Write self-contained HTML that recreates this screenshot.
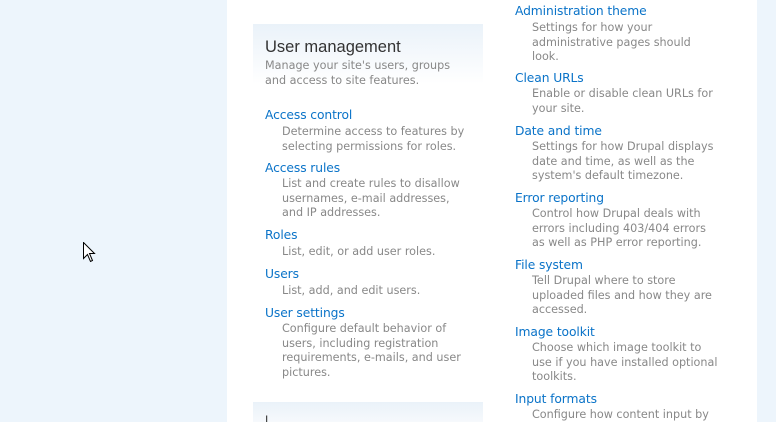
<!DOCTYPE html>
<html><head><style>
*{margin:0;padding:0}
html,body{width:776px;height:422px;overflow:hidden}
body{background:#edf5fc;position:relative;font-family:"DejaVu Sans","Liberation Sans",sans-serif}
#main{position:absolute;left:227px;top:0;width:530px;height:422px;background:#fff}
.box{position:absolute;left:253px;width:230px;height:60px;background:linear-gradient(#eaf2f9,#fff)}
.l{position:absolute;color:#0a73c8;font-size:12.3px;white-space:nowrap;letter-spacing:-0.1px}
.d{position:absolute;color:#888;font-size:11.2px;line-height:14.5px;white-space:nowrap}
.t{position:absolute;left:265px;top:38px;color:#333;font-family:"Liberation Sans",sans-serif;font-size:16.5px}
</style></head><body>
<div id="main"></div>
<div class="box" style="top:24px"></div>
<div class="box" style="top:402px;height:20px;background:linear-gradient(#eaf2f9,#f6f9fc)"></div>
<div class="t">User management</div>
<div class="d" style="left:265px;top:59px">Manage your site's users, groups<br>and access to site features.</div>

<div class="l" style="left:265px;top:108px">Access control</div>
<div class="d" style="left:282px;top:125px">Determine access to features by<br>selecting permissions for roles.</div>
<div class="l" style="left:265px;top:161px">Access rules</div>
<div class="d" style="left:282px;top:177px">List and create rules to disallow<br>usernames, e-mail addresses,<br>and IP addresses.</div>
<div class="l" style="left:265px;top:228px">Roles</div>
<div class="d" style="left:282px;top:245px">List, edit, or add user roles.</div>
<div class="l" style="left:265px;top:267px">Users</div>
<div class="d" style="left:282px;top:284px">List, add, and edit users.</div>
<div class="l" style="left:265px;top:306px">User settings</div>
<div class="d" style="left:282px;top:322px">Configure default behavior of<br>users, including registration<br>requirements, e-mails, and user<br>pictures.</div>
<div class="d" style="left:265px;top:414px;color:#333">I</div>

<div class="l" style="left:515px;top:4px">Administration theme</div>
<div class="d" style="left:532px;top:21px">Settings for how your<br>administrative pages should<br>look.</div>
<div class="l" style="left:515px;top:71px">Clean URLs</div>
<div class="d" style="left:532px;top:87px">Enable or disable clean URLs for<br>your site.</div>
<div class="l" style="left:515px;top:124px">Date and time</div>
<div class="d" style="left:532px;top:140px">Settings for how Drupal displays<br>date and time, as well as the<br>system's default timezone.</div>
<div class="l" style="left:515px;top:191px">Error reporting</div>
<div class="d" style="left:532px;top:207px">Control how Drupal deals with<br>errors including 403/404 errors<br>as well as PHP error reporting.</div>
<div class="l" style="left:515px;top:258px">File system</div>
<div class="d" style="left:532px;top:274px">Tell Drupal where to store<br>uploaded files and how they are<br>accessed.</div>
<div class="l" style="left:515px;top:325px">Image toolkit</div>
<div class="d" style="left:532px;top:341px">Choose which image toolkit to<br>use if you have installed optional<br>toolkits.</div>
<div class="l" style="left:515px;top:392px">Input formats</div>
<div class="d" style="left:532px;top:408px">Configure how content input by</div>

<svg style="position:absolute;left:83px;top:242px" width="14" height="22" viewBox="0 0 14 22"><path d="M0.5 0.5 L0.5 16.5 L4.5 12.5 L7.5 19.5 L9.5 18.5 L6.5 11.5 L11.5 11.5 Z" fill="#fff" stroke="#000" stroke-width="1"/></svg>
</body></html>
